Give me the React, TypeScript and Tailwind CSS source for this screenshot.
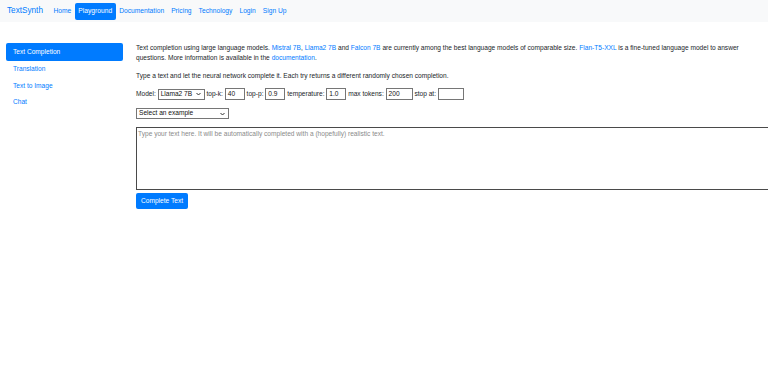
const navLinks = ["Home", "Playground", "Documentation", "Pricing", "Technology", "Login", "Sign Up"];
const sideLinks = ["Text Completion", "Translation", "Text to Image", "Chat"];

function FakeSelect({ value, width }: { value: string; width: string }) {
  return (
    <span
      className={`inline-flex h-[11px] items-center justify-between border border-[#767676] bg-white pl-[2px] pr-[3px] text-[6.6px] leading-none text-[#111] ${width}`}
    >
      <span>{value}</span>
      <svg width="5" height="4" viewBox="0 0 10 8" aria-hidden>
        <path d="M1 2 L5 6 L9 2" fill="none" stroke="#333" strokeWidth="2" />
      </svg>
    </span>
  );
}

function Field({ value, width }: { value: string; width: string }) {
  return (
    <span
      className={`inline-flex h-[12px] items-center border border-[#767676] bg-white px-[2px] text-[6.6px] leading-none text-[#111] ${width}`}
    >
      {value}
    </span>
  );
}

export default function App() {
  return (
    <div
      className="h-[371px] w-[768px] overflow-hidden bg-white text-[#212529]"
      style={{ fontFamily: '"Liberation Sans", Arial, sans-serif' }}
    >
      <nav className="flex h-[22px] items-center bg-[#f8f9fa] px-[7px]">
        <span className="mr-[7px] text-[8.2px] text-[#007bff]">TextSynth</span>
        {navLinks.map((l) => (
          <span
            key={l}
            className={
              l === "Playground"
                ? "rounded-[2px] bg-[#007bff] px-[3.5px] py-[3.5px] text-[6.7px] leading-[10px] text-white"
                : "px-[3.5px] py-[3.5px] text-[6.7px] leading-[10px] text-[#007bff]"
            }
          >
            {l}
          </span>
        ))}
      </nav>

      <div className="flex pt-[21px]">
        <aside className="ml-[6px] w-[117px] shrink-0">
          {sideLinks.map((l, i) => (
            <div
              key={l}
              className={
                i === 0
                  ? "rounded-[2px] bg-[#007bff] px-[7px] py-[4px] text-[6.6px] leading-[10px] text-white"
                  : "px-[7px] py-[3.3px] text-[6.6px] leading-[10px] text-[#007bff]"
              }
            >
              {l}
            </div>
          ))}
        </aside>

        <main className="ml-[13px] w-[620px] shrink-0 text-[6.6px] leading-[10px]">
          <p>
            Text completion using large language models. <span className="text-[#007bff]">Mistral 7B</span>,{" "}
            <span className="text-[#007bff]">Llama2 7B</span> and <span className="text-[#007bff]">Falcon 7B</span>{" "}
            are currently among the best language models of comparable size.{" "}
            <span className="text-[#007bff]">Flan-T5-XXL</span> is a fine-tuned language model to answer questions.
            More information is available in the <span className="text-[#007bff]">documentation</span>.
          </p>
          <p className="mt-[8px]">
            Type a text and let the neural network complete it. Each try returns a different randomly chosen
            completion.
          </p>

          <div className="mt-[7px] flex h-[12px] items-center whitespace-pre">
            <span>Model: </span>
            <FakeSelect value="Llama2 7B" width="w-[47px]" />
            <span> top-k: </span>
            <Field value="40" width="w-[20px]" />
            <span> top-p: </span>
            <Field value="0.9" width="w-[20px]" />
            <span> temperature: </span>
            <Field value="1.0" width="w-[20px]" />
            <span> max tokens: </span>
            <Field value="200" width="w-[27px]" />
            <span> stop at: </span>
            <Field value="" width="w-[26px]" />
          </div>

          <div className="mt-[8px] flex">
            <FakeSelect value="Select an example" width="w-[93px]" />
          </div>

          <textarea
            className="mt-[8px] block h-[63px] w-[660px] resize-none border-[1.5px] border-[#4a4a4a] px-[1px] py-[1px] text-[6.6px] leading-[9px] text-[#111] outline-none placeholder:text-[#8a8a8a]"
            placeholder="Type your text here. It will be automatically completed with a (hopefully) realistic text."
          />

          <button className="mt-[3px] flex h-[16px] items-center rounded-[2px] bg-[#007bff] px-[5px] text-[6.6px] text-white">
            Complete Text
          </button>
        </main>
      </div>
    </div>
  );
}
